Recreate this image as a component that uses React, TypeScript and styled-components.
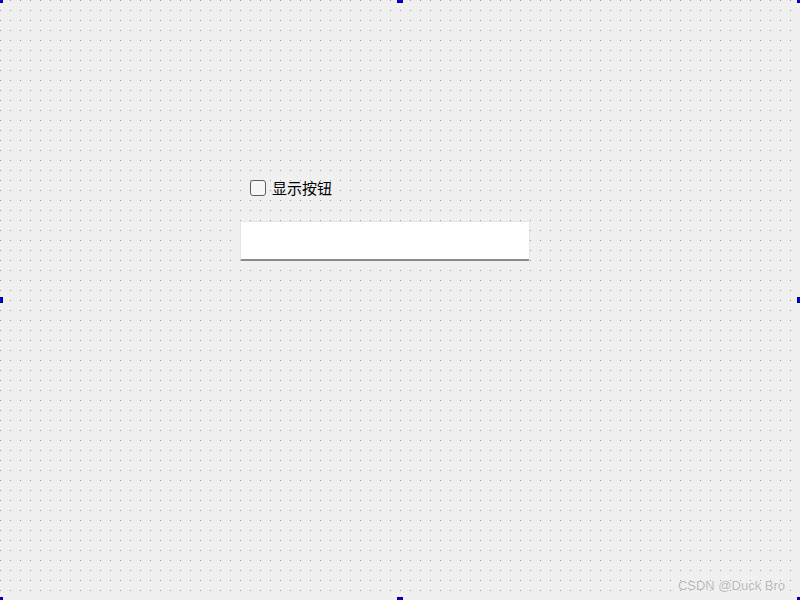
import React from "react";
import styled, { createGlobalStyle } from "styled-components";

const GlobalStyle = createGlobalStyle`
  html, body {
    margin: 0;
    padding: 0;
    background: #f0f0f0;
  }
`;

const Canvas = styled.div`
  position: relative;
  width: 800px;
  height: 600px;
  overflow: hidden;
  box-sizing: border-box;
  background-color: #f0f0f0;
  background-image: conic-gradient(
    from 270deg at 1px 1px,
    #9c9c9c 90deg,
    transparent 0
  );
  background-size: 10px 10px;
  background-position: 10px 10px;
  font-family: "Noto Sans CJK SC", "Liberation Sans", sans-serif;
  padding: 178px 0 0 240px;
  display: flex;
  flex-direction: column;
  align-items: flex-start;
`;

const CheckRow = styled.label`
  display: flex;
  align-items: center;
  gap: 6px;
  height: 20px;
  margin-left: 10px;
  font-size: 15px;
  color: #000;
  line-height: 20px;
`;

const Box = styled.span`
  width: 16px;
  height: 16px;
  box-sizing: border-box;
  border: 1px solid #5f5f5f;
  border-radius: 3px;
  background: #f7f7f7;
`;

const LineEdit = styled.div`
  margin-top: 23px;
  width: 290px;
  height: 40px;
  box-sizing: border-box;
  background: #fff;
  border: 1px solid #e6e6e6;
  border-bottom: 2px solid #8a8a8a;
  border-radius: 2px;
`;

const Handle = styled.span<{ $x: number; $y: number }>`
  position: absolute;
  left: ${(p) => p.$x - 3}px;
  top: ${(p) => p.$y - 3}px;
  width: 6px;
  height: 6px;
  box-sizing: border-box;
  background: #0000ff;
  border: 1px solid #000060;
`;

const Watermark = styled.div`
  position: absolute;
  right: 15px;
  bottom: 7px;
  font-family: "Liberation Sans", Arial, sans-serif;
  font-size: 13px;
  color: #b8b8b8;
  text-shadow: 0 0 1px #fff;
`;

const handles: [number, number][] = [
  [0, 0],
  [400, 0],
  [800, 0],
  [0, 300],
  [800, 300],
  [0, 600],
  [400, 600],
  [800, 600],
];

const App = () => {
  return (
    <>
      <GlobalStyle />
      <Canvas>
        <CheckRow>
          <Box />
          显示按钮
        </CheckRow>
        <LineEdit />
        {handles.map(([x, y]) => (
          <Handle key={`${x}-${y}`} $x={x} $y={y} />
        ))}
        <Watermark>CSDN @Duck Bro</Watermark>
      </Canvas>
    </>
  );
};

export default App;
